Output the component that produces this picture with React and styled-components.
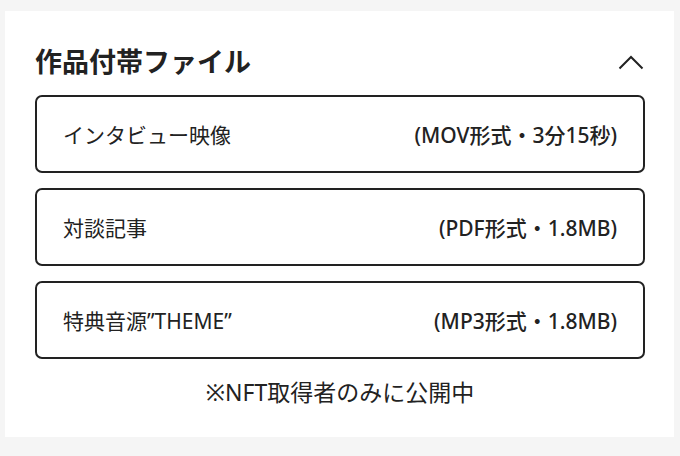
import styled, { createGlobalStyle } from 'styled-components';

const GlobalStyle = createGlobalStyle`
  html, body {
    margin: 0;
    padding: 0;
    background: #f5f5f5;
  }
  body {
    font-family: "Noto Sans", "Noto Sans CJK JP", sans-serif;
    color: #222;
  }
`;

const files = [
  { name: 'インタビュー映像', meta: '(MOV形式・3分15秒)' },
  { name: '対談記事', meta: '(PDF形式・1.8MB)' },
  { name: '特典音源”THEME”', meta: '(MP3形式・1.8MB)' },
];

const App = () => {
  return (
    <>
      <GlobalStyle />
      <Panel>
        <Header>
          <Title>作品付帯ファイル</Title>
          <Toggle aria-label="閉じる">
            <svg width="26" height="16" viewBox="0 0 26 16" fill="none">
              <path d="M1.5 14.5 L13 3 L24.5 14.5" stroke="#222" strokeWidth="2" />
            </svg>
          </Toggle>
        </Header>
        <List>
          {files.map((file) => (
            <FileCard key={file.name}>
              <FileName>{file.name}</FileName>
              <FileMeta>{file.meta}</FileMeta>
            </FileCard>
          ))}
        </List>
        <Note>※NFT取得者のみに公開中</Note>
      </Panel>
    </>
  );
};

export default App;

const Panel = styled.section`
  background: #fff;
  margin: 11px 6px 0 5px;
  height: 426px;
  box-sizing: border-box;
  padding: 37px 29px 0 30px;
  display: flex;
  flex-direction: column;
`;

const Header = styled.div`
  display: flex;
  align-items: center;
  justify-content: space-between;
  height: 27px;
  margin-bottom: 20px;
`;

const Title = styled.h2`
  margin: 0;
  font-size: 27px;
  font-weight: 700;
  line-height: 1;
`;

const Toggle = styled.button`
  border: none;
  background: none;
  padding: 0;
  margin-right: 1px;
  display: flex;
  align-items: center;
  cursor: pointer;
`;

const List = styled.div`
  display: flex;
  flex-direction: column;
  gap: 15px;
`;

const FileCard = styled.div`
  height: 78px;
  box-sizing: border-box;
  border: 2px solid #222;
  border-radius: 7px;
  padding: 0 26px;
  display: flex;
  align-items: center;
  justify-content: space-between;
`;

const FileName = styled.span`
  font-size: 21px;
  font-weight: 400;
`;

const FileMeta = styled.span`
  font-size: 21px;
  font-weight: 500;
`;

const Note = styled.p`
  margin: 16px 0 0;
  text-align: center;
  font-size: 23px;
  line-height: 1.5;
  font-weight: 400;
`;
